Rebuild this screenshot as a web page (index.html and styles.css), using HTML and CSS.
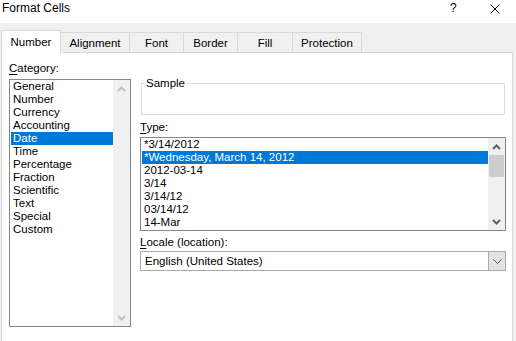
FILE: index.html
```html
<!DOCTYPE html>
<html>
<head>
<meta charset="utf-8">
<title>Format Cells</title>
<link rel="stylesheet" href="styles.css">
</head>
<body>
<div class="dialog">
  <div class="titlebar">
    <span class="title">Format Cells</span>
    <span class="help">?</span>
    <span class="close"><svg width="10" height="10" viewBox="0 0 10 10"><path d="M0.5 0.5L9.5 9.5M9.5 0.5L0.5 9.5" stroke="#000" stroke-width="1" fill="none"/></svg></span>
  </div>
  <div class="tabs">
    <div class="tab active w-number">Number</div>
    <div class="tab w-align">Alignment</div>
    <div class="tab w-font">Font</div>
    <div class="tab w-border">Border</div>
    <div class="tab w-fill">Fill</div>
    <div class="tab w-prot">Protection</div>
  </div>
  <div class="panel">
    <div class="col-left">
      <div class="label"><u>C</u>ategory:</div>
      <div class="listbox cat">
        <ul class="items">
          <li>General</li>
          <li>Number</li>
          <li>Currency</li>
          <li>Accounting</li>
          <li class="sel">Date</li>
          <li>Time</li>
          <li>Percentage</li>
          <li>Fraction</li>
          <li>Scientific</li>
          <li>Text</li>
          <li>Special</li>
          <li>Custom</li>
        </ul>
        <div class="vscroll disabled">
          <span class="arrow"><svg width="9" height="6" viewBox="0 0 9 6"><path d="M1 5L4.5 1.5L8 5" stroke="currentColor" stroke-width="2" fill="none"/></svg></span>
          <span class="track"></span>
          <span class="arrow"><svg width="9" height="6" viewBox="0 0 9 6"><path d="M1 1L4.5 4.5L8 1" stroke="currentColor" stroke-width="2" fill="none"/></svg></span>
        </div>
      </div>
    </div>
    <div class="col-right">
      <div class="sample"><span class="legend">Sample</span></div>
      <div class="label label-type"><u>T</u>ype:</div>
      <div class="listbox type">
        <ul class="items">
          <li>*3/14/2012</li>
          <li class="sel">*Wednesday, March 14, 2012</li>
          <li>2012-03-14</li>
          <li>3/14</li>
          <li>3/14/12</li>
          <li>03/14/12</li>
          <li>14-Mar</li>
        </ul>
        <div class="vscroll">
          <span class="arrow"><svg width="9" height="6" viewBox="0 0 9 6"><path d="M1 5L4.5 1.5L8 5" stroke="currentColor" stroke-width="2" fill="none"/></svg></span>
          <span class="thumb"></span>
          <span class="track"></span>
          <span class="arrow"><svg width="9" height="6" viewBox="0 0 9 6"><path d="M1 1L4.5 4.5L8 1" stroke="currentColor" stroke-width="2" fill="none"/></svg></span>
        </div>
      </div>
      <div class="label label-locale"><u>L</u>ocale (location):</div>
      <div class="combo">
        <span class="combo-text">English (United States)</span>
        <span class="combo-btn"><svg width="9" height="5" viewBox="0 0 9 5"><path d="M0.5 0.5L4.5 4.5L8.5 0.5" stroke="#5a5a5a" stroke-width="1" fill="none"/></svg></span>
      </div>
    </div>
  </div>
</div>
</body>
</html>
```

FILE: styles.css
```css
* { box-sizing: border-box; }
html, body { margin: 0; padding: 0; }
body {
  width: 516px;
  height: 341px;
  overflow: hidden;
  background: #f0f0f0;
  font-family: "Liberation Sans", Arial, sans-serif;
  font-size: 11.5px;
  color: #000;
}
u { text-decoration: underline; text-underline-offset: 2px; }

.titlebar {
  height: 23px;
  background: #fff;
  display: flex;
  align-items: flex-start;
}
.title { padding-left: 2px; line-height: 16px; font-size: 12px; }
.help { margin-left: auto; line-height: 16px; width: 6px; font-size: 12px; }
.close { margin-left: 34px; margin-right: 16px; margin-top: 4px; display: flex; }

.tabs {
  height: 29px;
  display: flex;
  align-items: flex-end;
  padding-left: 1px;
}
.tab {
  height: 20px;
  line-height: 18px;
  padding-top: 1px;
  text-align: center;
  border: 1px solid #d9d9d9;
  border-bottom: none;
  background: #f0f0f0;
  margin-left: -1px;
}
.tab.active {
  height: 23px;
  margin-bottom: -1px;
  background: #fff;
  position: relative;
  z-index: 1;
  margin-left: 0;
  line-height: 20px;
}
.w-number { width: 60px; }
.w-align { width: 70px; }
.w-font { width: 55px; }
.w-border { width: 55px; }
.w-fill { width: 56px; }
.w-prot { width: 70px; }

.panel {
  margin-left: 1px;
  width: 512px;
  height: 289px;
  background: #fff;
  border: 1px solid #d9d9d9;
  border-bottom: none;
  display: flex;
  align-items: flex-start;
  gap: 9px;
  padding: 7px 0 0 7px;
}
.col-left { width: 122px; display: flex; flex-direction: column; }
.col-right { width: 366px; display: flex; flex-direction: column; }

.label { line-height: 16px; height: 16px; }
.cat { margin-top: 3px; height: 248px; }

.listbox {
  display: flex;
  border: 1px solid #828790;
  background: #fff;
}
.items {
  flex: 1;
  list-style: none;
  margin: 0;
  padding: 0 0 0 1px;
  min-width: 0;
}
.items li {
  height: 13px;
  line-height: 13px;
  padding-left: 2px;
  white-space: nowrap;
}
.items li.sel { background: #0078d7; color: #fff; }

.vscroll {
  width: 17px;
  background: #f0f0f0;
  display: flex;
  flex-direction: column;
  color: #606060;
}
.vscroll.disabled { color: #c0c0c0; }
.arrow {
  height: 17px;
  display: flex;
  align-items: center;
  justify-content: center;
}
.track { flex: 1; }
.thumb { height: 22px; background: #cdcdcd; margin: 0 1px; }

.sample {
  margin: 23px 1px 0;
  height: 32px;
  border: 1px solid #dcdcdc;
  position: relative;
}
.legend {
  position: absolute;
  left: 2px;
  top: -9px;
  padding: 0 2px;
  background: #fff;
  line-height: 16px;
}
.label-type { margin-top: 4px; }
.type { margin-top: 2px; height: 94px; }
.label-locale { margin-top: 3px; }

.combo {
  margin-top: 1px;
  height: 20px;
  border: 1px solid #a9a9a9;
  display: flex;
  background: #fff;
}
.combo-text { flex: 1; padding-left: 4px; line-height: 18px; }
.combo-btn {
  width: 17px;
  background: #e3e3e3;
  border-left: 1px solid #a9a9a9;
  display: flex;
  align-items: center;
  justify-content: center;
}
```
